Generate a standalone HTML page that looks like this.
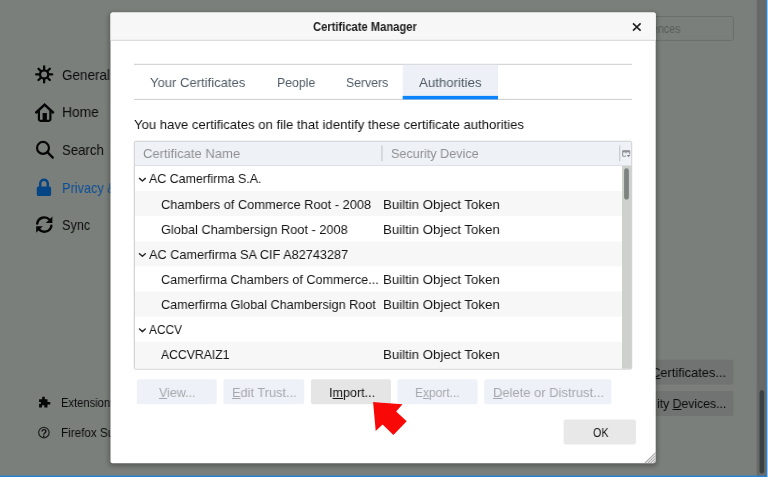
<!DOCTYPE html>
<html><head><meta charset="utf-8">
<style>
html,body{margin:0;padding:0;}
body{width:768px;height:477px;overflow:hidden;background:#7b7f7c;position:relative;font-family:"Liberation Sans","DejaVu Sans",sans-serif;font-size:13px;}
.a{position:absolute;white-space:nowrap;}
.t{transform-origin:0 0;line-height:normal;will-change:transform;}
u{text-decoration-thickness:1px;text-underline-offset:1px;}
svg{position:absolute;left:0;top:0;overflow:visible;will-change:transform;}
</style></head><body>
<svg width="768" height="477" viewBox="0 0 768 477">
<rect x="647.50" y="16.50" width="85.90" height="23.90" fill="none" rx="2" stroke="#6a6e6c" stroke-width="1"/>
<rect x="640.00" y="359.70" width="93.50" height="24.70" fill="#707371" rx="2"/>
<rect x="640.00" y="391.10" width="93.50" height="24.90" fill="#707371" rx="2"/>
<rect x="756.70" y="0.00" width="11.30" height="477.00" fill="#666967"/>
<rect x="759.50" y="390.30" width="4.60" height="83.10" fill="#394142" rx="2.3"/>
<g fill="none" stroke="#050606" stroke-linecap="round">
 <!-- gear -->
 <circle cx="44.15" cy="74.4" r="4.1" stroke-width="2.3"/>
 <path d="M49.15 74.40L52.15 74.40M47.69 77.94L49.81 80.06M44.15 79.40L44.15 82.40M40.61 77.94L38.49 80.06M39.15 74.40L36.15 74.40M40.61 70.86L38.49 68.74M44.15 69.40L44.15 66.40M47.69 70.86L49.81 68.74" stroke-width="2.3"/>
 <!-- home -->
 <path d="M36.2 112.5L44.6 104.6L53 112.5" stroke-width="2.5" stroke-linejoin="miter"/>
 <path d="M38.9 110.6V119.2a1.6 1.6 0 0 0 1.6 1.6H48.8a1.6 1.6 0 0 0 1.6 -1.6V110.6" stroke-width="2.2" stroke-linecap="butt"/>
 <!-- search -->
 <circle cx="43" cy="147.9" r="5.95" stroke-width="2.2"/>
 <path d="M47.6 152.4L52.8 157.6" stroke-width="2.3"/>
 <!-- sync -->
 <path d="M37.2 223.6A7.15 7.15 0 0 1 49.6 219.8" stroke-width="2.4"/>
 <path d="M51.4 225.6A7.15 7.15 0 0 1 39 229.4" stroke-width="2.4"/>
</g>
<rect x="42.6" y="113" width="4.3" height="8.2" fill="#050606"/>
<path d="M52.4 216.4V223H45.8Z" fill="#050606"/>
<path d="M36.2 232.8V226.2H42.8Z" fill="#050606"/>
<!-- lock -->
<rect x="36.8" y="186.5" width="14.3" height="9.5" rx="1.6" fill="#064585"/>
<path d="M40.2 187V183.6a3.8 3.8 0 0 1 7.6 0V187" fill="none" stroke="#064585" stroke-width="2.5"/>
<!-- puzzle -->
<path d="M39.1 399.2H42.2V396.8H44.8V399.2H47.5V402H50.3V404.4H47.5V407.6H44.3V405.2H42V407.6H39.1V403.8H40.9V402.1H39.1Z" fill="#050606"/>
<!-- help -->
<circle cx="43.9" cy="432.6" r="5.25" fill="none" stroke="#222423" stroke-width="1.3"/>
<text x="43.9" y="436.5" font-size="10.5" font-weight="bold" text-anchor="middle" fill="#111" font-family="Liberation Sans, sans-serif">?</text>
</svg>
<div class="a t" id="t0" style="left:651.7px;top:21.5px;font-size:12px;color:#585c5a;transform:scaleX(0.8898);">ences</div>
<div class="a t" id="t1" style="left:61.6px;top:66.5px;font-size:14.5px;color:#0b0c0c;transform:scaleX(0.9300);">General</div>
<div class="a t" id="t2" style="left:61.6px;top:104.2px;font-size:14.5px;color:#0b0c0c;transform:scaleX(0.9538);">Home</div>
<div class="a t" id="t3" style="left:61.5px;top:141.9px;font-size:14.5px;color:#0b0c0c;transform:scaleX(0.9074);">Search</div>
<div class="a t" id="t4" style="left:61.6px;top:179.6px;font-size:14.5px;color:#0a4f99;transform:scaleX(0.8790);">Privacy &amp;</div>
<div class="a t" id="t5" style="left:61.5px;top:217.3px;font-size:14.5px;color:#0b0c0c;transform:scaleX(0.8744);">Sync</div>
<div class="a t" id="t6" style="left:61.0px;top:395.7px;font-size:12px;color:#0b0c0c;transform:scaleX(0.9320);">Extensions</div>
<div class="a t" id="t7" style="left:61.0px;top:426.4px;font-size:12px;color:#0b0c0c;transform:scaleX(0.9720);">Firefox Support</div>
<div class="a t" id="t8" style="left:650.8px;top:364.8px;font-size:13.5px;color:#0b0c0c;transform:scaleX(0.9533);"><u>C</u>ertificates...</div>
<div class="a t" id="t9" style="left:656.6px;top:396.2px;font-size:13.5px;color:#0b0c0c;transform:scaleX(0.9053);">ity <u>D</u>evices...</div>
<svg width="768" height="477" viewBox="0 0 768 477">
<rect x="0.00" y="475.60" width="768.00" height="1.40" fill="#2481d6"/>
<rect x="766.00" y="0.00" width="1.20" height="477.00" fill="#2f7fd0"/>
<rect x="767.10" y="0.00" width="0.90" height="477.00" fill="#a8cff0"/>
</svg>
<div class="a" style="left:111px;top:13px;width:544px;height:450px;border-radius:2px;box-shadow:0 1.5px 5px 1.5px rgba(0,0,0,.3);"></div>
<svg width="768" height="477" viewBox="0 0 768 477">
<rect x="110.50" y="12.40" width="545.20" height="450.80" fill="#fff" rx="2"/>
<path d="M110.5 40.3V14.4a2 2 0 0 1 2 -2H653.7a2 2 0 0 1 2 2V40.3Z" fill="#f7f7f7"/>
<rect x="110.50" y="39.80" width="545.20" height="1.00" fill="#d4d4d6"/>
<rect x="134.00" y="63.80" width="498.00" height="1.00" fill="#cdcdd0"/>
<rect x="134.00" y="98.90" width="498.00" height="1.00" fill="#cdcdd0"/>
<rect x="402.70" y="64.80" width="95.30" height="31.20" fill="#edf0f6"/>
<rect x="402.70" y="95.90" width="95.30" height="3.50" fill="#0b84fb"/>
<rect x="134.30" y="141.30" width="497.40" height="227.80" fill="#fff" rx="1.5" stroke="#c9c9cc" stroke-width="1"/>
<rect x="134.80" y="141.80" width="496.40" height="23.80" fill="#eef1f6"/>
<rect x="134.80" y="165.10" width="496.40" height="0.90" fill="#dcdde0"/>
<rect x="381.40" y="145.50" width="1.10" height="15.70" fill="#c3c5c9"/>
<rect x="619.20" y="145.50" width="1.10" height="15.70" fill="#c3c5c9"/>
<rect x="135.00" y="191.10" width="487.00" height="25.10" fill="#f7f7f7"/>
<rect x="135.00" y="241.30" width="487.00" height="25.10" fill="#f7f7f7"/>
<rect x="135.00" y="291.50" width="487.00" height="25.10" fill="#f7f7f7"/>
<rect x="135.00" y="341.70" width="487.00" height="26.90" fill="#f7f7f7"/>
<rect x="622.00" y="166.00" width="9.20" height="202.60" fill="#cdd1cd"/>
<rect x="624.10" y="168.30" width="4.80" height="31.40" fill="#7c8381" rx="2.4"/>
<rect x="136.80" y="379.30" width="79.90" height="25.00" fill="#eef1f7" rx="2"/>
<rect x="223.50" y="379.30" width="80.70" height="25.00" fill="#eef1f7" rx="2"/>
<rect x="311.00" y="379.30" width="79.90" height="25.00" fill="#e5e5e6" rx="2"/>
<rect x="397.40" y="379.30" width="80.20" height="25.00" fill="#eef1f7" rx="2"/>
<rect x="484.20" y="379.30" width="127.20" height="25.00" fill="#eef1f7" rx="2"/>
<rect x="563.60" y="419.40" width="72.30" height="25.00" fill="#e8e8e9" rx="2"/>
</svg>
<div class="a t" id="t10" style="left:313.3px;top:19.6px;font-size:12px;color:#1c1c1c;font-weight:bold;transform:scaleX(0.9320);">Certificate Manager</div>
<div class="a t" id="t11" style="left:150px;top:75px;font-size:13.5px;color:#4f5b66;transform:scaleX(0.9679);">Your Certificates</div>
<div class="a t" id="t12" style="left:276.6px;top:75px;font-size:13.5px;color:#4f5b66;transform:scaleX(0.9109);">People</div>
<div class="a t" id="t13" style="left:345.6px;top:75px;font-size:13.5px;color:#4f5b66;transform:scaleX(0.9072);">Servers</div>
<div class="a t" id="t14" style="left:419px;top:75px;font-size:13.5px;color:#4f5b66;transform:scaleX(0.9812);">Authorities</div>
<div class="a t" id="t15" style="left:134px;top:116.6px;font-size:13.5px;color:#111;transform:scaleX(0.9726);">You have certificates on file that identify these certificate authorities</div>
<div class="a t" id="t16" style="left:142.6px;top:146.3px;font-size:13.5px;color:#8f9094;transform:scaleX(0.9667);">Certificate Name</div>
<div class="a t" id="t17" style="left:390.7px;top:146.3px;font-size:13.5px;color:#8f9094;transform:scaleX(0.9350);">Security Device</div>
<div class="a t" id="t18" style="left:149px;top:171.4px;font-size:13.5px;color:#151515;transform:scaleX(0.9200);">AC Camerfirma S.A.</div>
<div class="a t" id="t19" style="left:160.9px;top:197px;font-size:13.5px;color:#151515;transform:scaleX(0.9497);">Chambers of Commerce Root - 2008</div>
<div class="a t" id="t20" style="left:383.2px;top:197px;font-size:13.5px;color:#151515;transform:scaleX(0.9809);">Builtin Object Token</div>
<div class="a t" id="t21" style="left:160.9px;top:222px;font-size:13.5px;color:#151515;transform:scaleX(0.9465);">Global Chambersign Root - 2008</div>
<div class="a t" id="t22" style="left:383.2px;top:222px;font-size:13.5px;color:#151515;transform:scaleX(0.9809);">Builtin Object Token</div>
<div class="a t" id="t23" style="left:149px;top:247px;font-size:13.5px;color:#151515;transform:scaleX(0.9414);">AC Camerfirma SA CIF A82743287</div>
<div class="a t" id="t24" style="left:160.9px;top:272px;font-size:13.5px;color:#151515;transform:scaleX(0.9365);">Camerfirma Chambers of Commerce...</div>
<div class="a t" id="t25" style="left:383.2px;top:272px;font-size:13.5px;color:#151515;transform:scaleX(0.9809);">Builtin Object Token</div>
<div class="a t" id="t26" style="left:160.9px;top:297px;font-size:13.5px;color:#151515;transform:scaleX(0.9360);">Camerfirma Global Chambersign Root</div>
<div class="a t" id="t27" style="left:383.2px;top:297px;font-size:13.5px;color:#151515;transform:scaleX(0.9809);">Builtin Object Token</div>
<div class="a t" id="t28" style="left:149px;top:322px;font-size:13.5px;color:#151515;transform:scaleX(0.8796);">ACCV</div>
<div class="a t" id="t29" style="left:161.2px;top:347.4px;font-size:13.5px;color:#151515;transform:scaleX(0.9039);">ACCVRAIZ1</div>
<div class="a t" id="t30" style="left:383.2px;top:347.4px;font-size:13.5px;color:#151515;transform:scaleX(0.9809);">Builtin Object Token</div>
<div class="a t" id="t31" style="left:159.4px;top:384.5px;font-size:13.5px;color:#a6a8ad;transform:scaleX(0.9233);"><u>V</u>iew...</div>
<div class="a t" id="t32" style="left:232px;top:384.5px;font-size:13.5px;color:#a6a8ad;transform:scaleX(0.9473);"><u>E</u>dit Trust...</div>
<div class="a t" id="t33" style="left:328.6px;top:384.5px;font-size:13.5px;color:#111;transform:scaleX(0.9307);">I<u>m</u>port...</div>
<div class="a t" id="t34" style="left:415.4px;top:384.5px;font-size:13.5px;color:#a6a8ad;transform:scaleX(0.8870);">E<u>x</u>port...</div>
<div class="a t" id="t35" style="left:492.9px;top:384.5px;font-size:13.5px;color:#a6a8ad;transform:scaleX(0.9606);"><u>D</u>elete or Distrust...</div>
<div class="a t" id="t36" style="left:592.7px;top:424.9px;font-size:13.5px;color:#111;transform:scaleX(0.7994);">OK</div>
<svg width="768" height="477" viewBox="0 0 768 477">
<g fill="none" stroke="#2b2b2b" stroke-width="1.5" stroke-linecap="round" stroke-linejoin="round">
<path d="M139.5 178.4L142.4 181.0L145.3 178.4"/><path d="M139.5 253.7L142.4 256.3L145.3 253.7"/><path d="M139.5 329.0L142.4 331.6L145.3 329.0"/>
</g>
<!-- close -->
<path d="M633 23.4L640.6 30.7M640.6 23.4L633 30.7" stroke="#1f1f1f" stroke-width="1.6" fill="none"/>
<!-- column picker -->
<g fill="none" stroke="#8d9094">
 <path d="M622.7 150.7H629.7V154.5M622.7 150.7V156.2H626" stroke-width="1"/>
 <path d="M622.7 151.6H629.7" stroke-width="1.6"/>
 <path d="M626 150.7V153.6" stroke-width="0.8"/>
</g>
<path d="M626.7 154.9H630.3L628.5 157.2Z" fill="#7f8286"/>
<!-- resizer -->
<g stroke="#a9a9a9" stroke-width="1.1">
 <path d="M645 463L656 452.4M647.8 463L656 455.1M650.6 463L656 457.8M653.4 463L656 460.5"/>
</g>
<!-- arrow -->
<polygon points="373.1,402.1 402.5,404.2 396.2,411.5 406.7,421.3 393.4,435.1 382.6,424.6 375.7,430.9" fill="#f90808"/>
</svg>
</body></html>
